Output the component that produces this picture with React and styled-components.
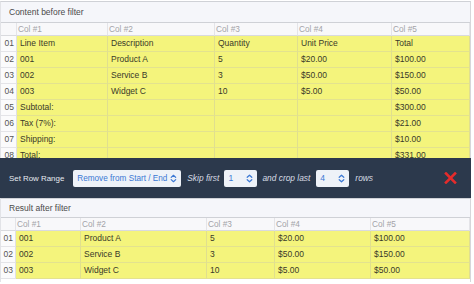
import React from "react";
import styled, { createGlobalStyle } from "styled-components";

const Global = createGlobalStyle`
  html, body { margin: 0; padding: 0; background: #ffffff; }
  body { font-family: "Liberation Sans", Arial, sans-serif; }
`;

const Page = styled.div`
  width: 471px;
  padding-top: 1px;
  display: flex;
  flex-direction: column;
`;

const Panel = styled.section`
  border-top: 1px solid #cfd1d6;
  border-left: 1px solid #e2e3e7;
  border-right: 1px solid #d6d7db;
  height: ${(p) => p.$h}px;
  overflow: hidden;
  box-sizing: border-box;
  background: #fff;
`;

const PanelTitle = styled.div`
  height: ${(p) => p.$h}px;
  display: flex;
  align-items: center;
  padding-left: 8px;
  background: #f5f6fa;
  border-bottom: 1px solid #cfd1d6;
  font-size: 8.5px;
  color: #4a4a4a;
`;

const Grid = styled.div`
  display: grid;
  grid-template-columns: ${(p) => p.$cols};
`;

const HeadCell = styled.div`
  height: 12px;
  line-height: 12px;
  padding-left: 1px;
  font-size: 8.3px;
  color: #a3a3a8;
  background: #f8f8fa;
  border-right: 1px solid #e4e4e8;
  border-bottom: 1px solid #d9dade;
  white-space: nowrap;
`;

const NumCell = styled.div`
  height: 15px;
  line-height: 15px;
  text-align: right;
  padding-right: 2px;
  font-size: 8.5px;
  color: #555;
  background: #fbfbfc;
  border-right: 1px solid #e0e0e4;
  border-bottom: 1px solid #e4e4e8;
`;

const DataCell = styled.div`
  height: 15px;
  line-height: 15px;
  padding-left: 3px;
  font-size: 8.5px;
  color: #3a3a2a;
  background: #f4f47c;
  border-right: 1px solid #e0df8e;
  border-bottom: 1px solid #e3e28f;
  white-space: nowrap;
  overflow: hidden;
`;

const Bar = styled.div`
  height: 40px;
  background: #2c394c;
  display: flex;
  align-items: center;
  padding-left: 9px;
  padding-right: 14px;
  color: #e6eaf0;
  white-space: nowrap;
`;

const Label = styled.span`
  font-style: ${(p) => (p.$italic ? "italic" : "normal")};
  margin-right: ${(p) => p.$mr}px;
  color: ${(p) => (p.$italic ? "#d8dde6" : "#e6eaf0")};
  font-size: ${(p) => (p.$italic ? "8.4px" : "7.9px")};
`;

const Select = styled.div`
  width: ${(p) => p.$w}px;
  flex: none;
  height: 17px;
  box-sizing: border-box;
  background: #eef2f8;
  border-radius: 2px;
  display: flex;
  align-items: center;
  justify-content: space-between;
  gap: 3px;
  padding: 0 4px 0 4px;
  color: #3b78d4;
  font-size: ${(p) => p.$fs || 8.5}px;
  margin-right: ${(p) => p.$mr}px;
  white-space: nowrap;
`;

const Spacer = styled.div`
  flex: 1;
`;

const Chevrons = () => (
  <svg width="7" height="9" viewBox="0 0 7 9" fill="none" stroke="#3b78d4" strokeWidth="1.2" strokeLinecap="round" strokeLinejoin="round">
    <path d="M1.2 3.3 L3.5 1.2 L5.8 3.3" />
    <path d="M1.2 5.7 L3.5 7.8 L5.8 5.7" />
  </svg>
);

const CloseX = () => (
  <svg width="13" height="12" viewBox="0 0 13 12" fill="none" stroke="#e52b2b" strokeWidth="2.6" strokeLinecap="square">
    <path d="M2 1.5 L11 10.5" />
    <path d="M11 1.5 L2 10.5" />
  </svg>
);

const topRows = [
  ["Line Item", "Description", "Quantity", "Unit Price", "Total"],
  ["001", "Product A", "5", "$20.00", "$100.00"],
  ["002", "Service B", "3", "$50.00", "$150.00"],
  ["003", "Widget C", "10", "$5.00", "$50.00"],
  ["Subtotal:", "", "", "", "$300.00"],
  ["Tax (7%):", "", "", "", "$21.00"],
  ["Shipping:", "", "", "", "$10.00"],
  ["Total:", "", "", "", "$331.00"],
];

const bottomRows = [
  ["001", "Product A", "5", "$20.00", "$100.00"],
  ["002", "Service B", "3", "$50.00", "$150.00"],
  ["003", "Widget C", "10", "$5.00", "$50.00"],
];

const Table = ({ cols, rows }) => (
  <Grid $cols={cols}>
    <HeadCell />
    {["Col #1", "Col #2", "Col #3", "Col #4", "Col #5"].map((c) => (
      <HeadCell key={c}>{c}</HeadCell>
    ))}
    {rows.map((r, i) => (
      <React.Fragment key={i}>
        <NumCell>{String(i + 1).padStart(2, "0")}</NumCell>
        {r.map((v, j) => (
          <DataCell key={j}>{v}</DataCell>
        ))}
      </React.Fragment>
    ))}
  </Grid>
);

export default function App() {
  return (
    <>
      <Global />
      <Page>
        <Panel $h={157}>
          <PanelTitle $h={20}>Content before filter</PanelTitle>
          <Table cols="16px 91px 107px 83px 94px 1fr" rows={topRows} />
        </Panel>
        <Bar>
          <Label $mr={9}>Set Row Range</Label>
          <Select $w={108} $mr={6} $fs={8.2}>
            <span>Remove from Start / End</span>
            <Chevrons />
          </Select>
          <Label $italic $mr={5}>Skip first</Label>
          <Select $w={33} $mr={5}>
            <span>1</span>
            <Chevrons />
          </Select>
          <Label $italic $mr={6}>and crop last</Label>
          <Select $w={33} $mr={6}>
            <span>4</span>
            <Chevrons />
          </Select>
          <Label $italic $mr={0}>rows</Label>
          <Spacer />
          <CloseX />
        </Bar>
        <Panel $h={84}>
          <PanelTitle $h={18}>Result after filter</PanelTitle>
          <Table cols="15px 65px 126px 68px 96px 1fr" rows={bottomRows} />
        </Panel>
      </Page>
    </>
  );
}
